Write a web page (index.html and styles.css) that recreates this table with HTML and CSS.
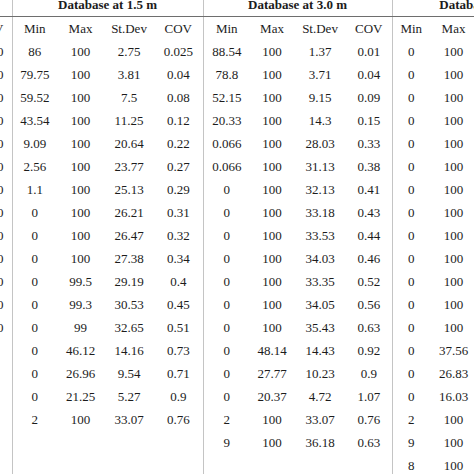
FILE: index.html
```html
<!DOCTYPE html>
<html>
<head>
<meta charset="utf-8">
<link rel="stylesheet" href="styles.css">
</head>
<body>
<div class="viewport">
<table class="stats">
  <colgroup>
    <col class="c-frag">
    <col class="c11"><col class="c12"><col class="c13"><col class="c14">
    <col class="c21"><col class="c22"><col class="c23"><col class="c24">
    <col class="c31"><col class="c32"><col class="c33"><col class="c34">
  </colgroup>
  <thead>
    <tr class="group-row">
      <th class="frag"></th>
      <th colspan="4" class="grp">Database at 1.5 m</th>
      <th colspan="4" class="grp">Database at 3.0 m</th>
      <th colspan="4" class="grp">Database at 4.5 m</th>
    </tr>
    <tr class="head-row">
      <th class="frag">COV</th>
      <th class="gs">Min</th><th>Max</th><th>St.Dev</th><th>COV</th>
      <th class="gs">Min</th><th>Max</th><th>St.Dev</th><th>COV</th>
      <th class="gs">Min</th><th>Max</th><th>St.Dev</th><th>COV</th>
    </tr>
  </thead>
  <tbody>
    <tr><td class="frag">0.0</td><td class="gs">86</td><td>100</td><td>2.75</td><td>0.025</td><td class="gs">88.54</td><td>100</td><td>1.37</td><td>0.01</td><td class="gs">0</td><td>100</td><td></td><td></td></tr>
    <tr><td class="frag">0.0</td><td class="gs">79.75</td><td>100</td><td>3.81</td><td>0.04</td><td class="gs">78.8</td><td>100</td><td>3.71</td><td>0.04</td><td class="gs">0</td><td>100</td><td></td><td></td></tr>
    <tr><td class="frag">0.0</td><td class="gs">59.52</td><td>100</td><td>7.5</td><td>0.08</td><td class="gs">52.15</td><td>100</td><td>9.15</td><td>0.09</td><td class="gs">0</td><td>100</td><td></td><td></td></tr>
    <tr><td class="frag">0.0</td><td class="gs">43.54</td><td>100</td><td>11.25</td><td>0.12</td><td class="gs">20.33</td><td>100</td><td>14.3</td><td>0.15</td><td class="gs">0</td><td>100</td><td></td><td></td></tr>
    <tr><td class="frag">0.0</td><td class="gs">9.09</td><td>100</td><td>20.64</td><td>0.22</td><td class="gs">0.066</td><td>100</td><td>28.03</td><td>0.33</td><td class="gs">0</td><td>100</td><td></td><td></td></tr>
    <tr><td class="frag">0.0</td><td class="gs">2.56</td><td>100</td><td>23.77</td><td>0.27</td><td class="gs">0.066</td><td>100</td><td>31.13</td><td>0.38</td><td class="gs">0</td><td>100</td><td></td><td></td></tr>
    <tr><td class="frag">0.0</td><td class="gs">1.1</td><td>100</td><td>25.13</td><td>0.29</td><td class="gs">0</td><td>100</td><td>32.13</td><td>0.41</td><td class="gs">0</td><td>100</td><td></td><td></td></tr>
    <tr><td class="frag">0.0</td><td class="gs">0</td><td>100</td><td>26.21</td><td>0.31</td><td class="gs">0</td><td>100</td><td>33.18</td><td>0.43</td><td class="gs">0</td><td>100</td><td></td><td></td></tr>
    <tr><td class="frag">0.0</td><td class="gs">0</td><td>100</td><td>26.47</td><td>0.32</td><td class="gs">0</td><td>100</td><td>33.53</td><td>0.44</td><td class="gs">0</td><td>100</td><td></td><td></td></tr>
    <tr><td class="frag">0.0</td><td class="gs">0</td><td>100</td><td>27.38</td><td>0.34</td><td class="gs">0</td><td>100</td><td>34.03</td><td>0.46</td><td class="gs">0</td><td>100</td><td></td><td></td></tr>
    <tr><td class="frag">0.0</td><td class="gs">0</td><td>99.5</td><td>29.19</td><td>0.4</td><td class="gs">0</td><td>100</td><td>33.35</td><td>0.52</td><td class="gs">0</td><td>100</td><td></td><td></td></tr>
    <tr><td class="frag">0.0</td><td class="gs">0</td><td>99.3</td><td>30.53</td><td>0.45</td><td class="gs">0</td><td>100</td><td>34.05</td><td>0.56</td><td class="gs">0</td><td>100</td><td></td><td></td></tr>
    <tr><td class="frag">0.0</td><td class="gs">0</td><td>99</td><td>32.65</td><td>0.51</td><td class="gs">0</td><td>100</td><td>35.43</td><td>0.63</td><td class="gs">0</td><td>100</td><td></td><td></td></tr>
    <tr><td class="frag"></td><td class="gs">0</td><td>46.12</td><td>14.16</td><td>0.73</td><td class="gs">0</td><td>48.14</td><td>14.43</td><td>0.92</td><td class="gs">0</td><td>37.56</td><td></td><td></td></tr>
    <tr><td class="frag"></td><td class="gs">0</td><td>26.96</td><td>9.54</td><td>0.71</td><td class="gs">0</td><td>27.77</td><td>10.23</td><td>0.9</td><td class="gs">0</td><td>26.83</td><td></td><td></td></tr>
    <tr><td class="frag"></td><td class="gs">0</td><td>21.25</td><td>5.27</td><td>0.9</td><td class="gs">0</td><td>20.37</td><td>4.72</td><td>1.07</td><td class="gs">0</td><td>16.03</td><td></td><td></td></tr>
    <tr><td class="frag"></td><td class="gs">2</td><td>100</td><td>33.07</td><td>0.76</td><td class="gs">2</td><td>100</td><td>33.07</td><td>0.76</td><td class="gs">2</td><td>100</td><td></td><td></td></tr>
    <tr><td class="frag"></td><td class="gs"></td><td></td><td></td><td></td><td class="gs">9</td><td>100</td><td>36.18</td><td>0.63</td><td class="gs">9</td><td>100</td><td></td><td></td></tr>
    <tr><td class="frag"></td><td class="gs"></td><td></td><td></td><td></td><td class="gs"></td><td></td><td></td><td></td><td class="gs">8</td><td>100</td><td></td><td></td></tr>
  </tbody>
</table>
</div>
</body>
</html>
```
FILE: styles.css
```css
html, body {
  margin: 0;
  padding: 0;
  background: #ffffff;
  overflow: hidden;
}
.viewport {
  width: 474px;
  height: 474px;
  overflow: hidden;
}
.stats {
  margin-left: -40px;
  margin-top: -7px;
  border-collapse: collapse;
  table-layout: fixed;
  width: 625px;
  font-family: "Liberation Serif", "Times New Roman", serif;
  font-size: 13px;
  color: #1c1c1c;
}
.c-frag { width: 52px; }
.c11 { width: 45px; }
.c12 { width: 47px; }
.c13 { width: 50px; }
.c14 { width: 49px; }
.c21 { width: 47px; }
.c22 { width: 44px; }
.c23 { width: 52px; }
.c24 { width: 46px; }
.c31 { width: 38px; }
.c32 { width: 47px; }
.c33 { width: 54px; }
.c34 { width: 54px; }
.stats th,
.stats td {
  padding: 0;
  height: 23px;
  line-height: 23px;
  text-align: center;
  font-weight: normal;
  white-space: nowrap;
  overflow: hidden;
}
.stats .frag {
  text-align: right;
  padding-right: 8px;
}
.group-row th {
  border-bottom: 1px solid #6e6e6e;
}
.group-row .grp {
  font-weight: bold;
  border-left: 1px solid #c4c4c4;
}
.gs {
  border-left: 1px solid #c4c4c4;
}
```
